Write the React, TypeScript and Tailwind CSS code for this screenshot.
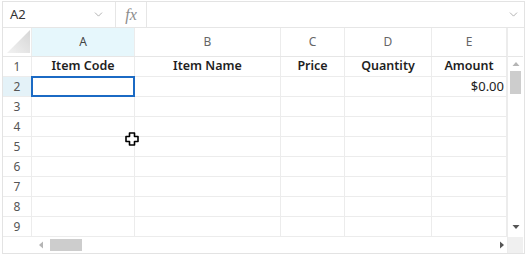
import { ChevronDown } from 'lucide-react';

// Sheet layout: widths/heights taken from the reference grid.
const cols = [
  { key: 'A', w: 'w-[103px]', title: 'Item Code' },
  { key: 'B', w: 'w-[146px]', title: 'Item Name' },
  { key: 'C', w: 'w-[64px]', title: 'Price' },
  { key: 'D', w: 'w-[87px]', title: 'Quantity' },
  { key: 'E', w: 'w-[75px]', title: 'Amount' },
];

const rows = [1, 2, 3, 4, 5, 6, 7, 8, 9];

function Corner() {
  return (
    <svg width="29" height="28" viewBox="0 0 29 28" className="block">
      <defs>
        <linearGradient id="sa" x1="0" y1="1" x2="1" y2="0">
          <stop offset="0" stopColor="#f2f2f2" />
          <stop offset="1" stopColor="#d6d6d6" />
        </linearGradient>
      </defs>
      <polygon points="4,25 27,2 27,25" fill="url(#sa)" />
    </svg>
  );
}

function MoveCursor() {
  return (
    <svg width="14" height="14" viewBox="0 0 14 14" className="pointer-events-none absolute left-[125px] top-[132px]">
      <polygon
        points="4.5,1 9.5,1 9.5,4.5 13,4.5 13,9.5 9.5,9.5 9.5,13 4.5,13 4.5,9.5 1,9.5 1,4.5 4.5,4.5"
        fill="#fff"
        stroke="#000"
        strokeWidth="1.6"
        strokeLinejoin="round"
      />
    </svg>
  );
}

function Cell({ col, row }: { col: (typeof cols)[number]; row: number }) {
  const selected = col.key === 'A' && row === 2;
  let text = '';
  if (row === 1) text = col.title;
  if (row === 2 && col.key === 'E') text = '$0.00';
  return (
    <div
      className={`${col.w} relative flex h-[20px] shrink-0 items-center border-r border-b border-[#ececec] ${
        row === 1 ? 'justify-center text-[12.5px] font-semibold text-[#1f1f1f]' : 'justify-end pr-[2px] text-[#222]'
      }`}
    >
      {text}
      {selected && <div className="absolute -top-px -left-px h-[21px] w-[104px] border-2 border-[#1b6ac4]" />}
    </div>
  );
}

export default function App() {
  return (
    <div className="relative h-[260px] w-[528px] bg-white pt-px pl-[2px] text-[13px] text-[#222]" style={{ fontFamily: '"Noto Sans", "Open Sans", sans-serif' }}>
      <div className="flex h-[253px] w-[523px] flex-col border border-[#e3e3e3]">
        {/* ── Formula bar ── */}
        <div className="flex h-[26px] shrink-0 items-center border-b border-[#e6e6e6]">
          <div className="flex h-full w-[112px] items-center justify-between pr-[10px] pl-[7px] text-[13px] text-[#333]">
            <span>A2</span>
            <ChevronDown size={13} strokeWidth={1.2} className="text-[#8a8a8a]" />
          </div>
          <div className="h-full w-px bg-[#e6e6e6]" />
          <div className="flex h-full w-[30px] items-center justify-center text-[16px] text-[#8c8c8c] italic" style={{ fontFamily: '"Liberation Serif", serif' }}>
            fx
          </div>
          <div className="h-full w-px bg-[#e6e6e6]" />
          <div className="flex flex-1 items-center justify-end pr-[4px]">
            <ChevronDown size={13} strokeWidth={1.2} className="text-[#8a8a8a]" />
          </div>
        </div>

        <div className="flex flex-1">
          {/* ── Sheet ── */}
          <div className="flex w-[504px] flex-col">
            <div className="flex h-[29px] border-b border-[#e6e6e6] text-[12px] text-[#666]">
              <div className="w-[29px] border-r border-[#ececec]">
                <Corner />
              </div>
              {cols.map((c) => (
                <div
                  key={c.key}
                  className={`${c.w} flex shrink-0 items-center justify-center border-r border-[#ececec] ${c.key === 'A' ? 'bg-[#e6f7fc] text-[#444]' : ''}`}
                >
                  {c.key}
                </div>
              ))}
            </div>
            {rows.map((r) => (
              <div key={r} className="flex">
                <div
                  className={`flex h-[20px] w-[29px] shrink-0 items-center justify-center border-r border-b border-[#ececec] text-[12px] text-[#555] ${
                    r === 2 ? 'bg-[#e4f2f8]' : ''
                  }`}
                >
                  {r}
                </div>
                {cols.map((c) => (
                  <Cell key={c.key} col={c} row={r} />
                ))}
              </div>
            ))}
            {/* horizontal scrollbar */}
            <div className="flex h-[16px] items-center">
              <svg width="6" height="8" viewBox="0 0 6 8" className="ml-[35px]">
                <polygon points="5,0.5 5,7.5 1,4" fill="#b5b5b5" />
              </svg>
              <div className="ml-[6px] h-[12px] w-[32px] bg-[#cdcdcd]" />
              <div className="flex-1" />
              <svg width="6" height="8" viewBox="0 0 6 8" className="mr-[2px]">
                <polygon points="1,0.5 1,7.5 5,4" fill="#555" />
              </svg>
            </div>
          </div>

          {/* ── Vertical scrollbar ── */}
          <div className="flex w-[16px] flex-col border-l border-[#ececec]">
            <div className="h-[29px] border-b border-[#e6e6e6]" />
            <div className="flex h-[180px] flex-col items-center">
              <svg width="8" height="6" viewBox="0 0 8 6" className="mt-[4px]">
                <polygon points="0.5,5 7.5,5 4,1" fill="#b5b5b5" />
              </svg>
              <div className="mt-[4px] h-[23px] w-[11px] bg-[#cdcdcd]" />
              <div className="flex-1" />
              <svg width="8" height="6" viewBox="0 0 8 6" className="mb-[7px]">
                <polygon points="0.5,1 7.5,1 4,5" fill="#555" />
              </svg>
            </div>
            <div className="flex-1 bg-[#f0f0f0]" />
          </div>
        </div>
      </div>
      <MoveCursor />
    </div>
  );
}
